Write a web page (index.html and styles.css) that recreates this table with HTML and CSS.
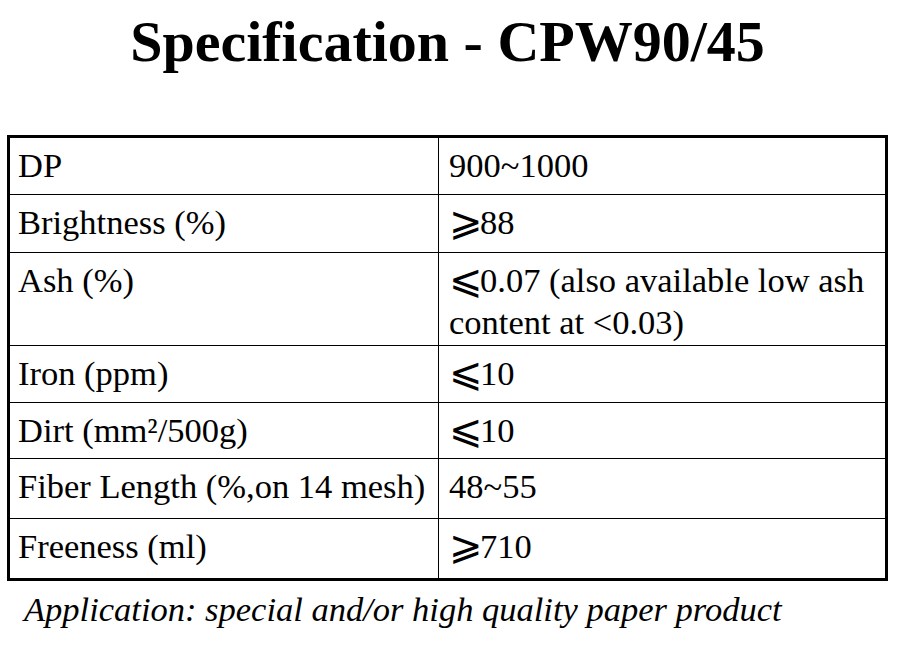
FILE: index.html
```html
<!DOCTYPE html>
<html lang="en">
<head>
    <meta charset="UTF-8">
    <meta name="viewport" content="width=device-width, initial-scale=1.0">
    <title>Specification - CPW90/45</title>
    <link rel="stylesheet" href="styles.css">
</head>
<body>
    <div class="page">
        <h1 class="title">Specification - CPW90/45</h1>
        <table class="spec">
            <tr class="r1">
                <td class="name">DP</td>
                <td class="value">900~1000</td>
            </tr>
            <tr class="r2">
                <td class="name">Brightness (%)</td>
                <td class="value"><span class="sym">⩾</span>88</td>
            </tr>
            <tr class="r3">
                <td class="name">Ash (%)</td>
                <td class="value"><span class="sym">⩽</span>0.07 (also available low ash content at &lt;0.03)</td>
            </tr>
            <tr class="r4">
                <td class="name">Iron (ppm)</td>
                <td class="value"><span class="sym">⩽</span>10</td>
            </tr>
            <tr class="r5">
                <td class="name">Dirt (mm²/500g)</td>
                <td class="value"><span class="sym">⩽</span>10</td>
            </tr>
            <tr class="r6">
                <td class="name">Fiber Length (%,on 14 mesh)</td>
                <td class="value">48~55</td>
            </tr>
            <tr class="r7">
                <td class="name">Freeness (ml)</td>
                <td class="value"><span class="sym">⩾</span>710</td>
            </tr>
        </table>
        <p class="note">Application: special and/or high quality paper product</p>
    </div>
</body>
</html>
```

FILE: styles.css
```css
body {
    margin: 0;
    background: #fff;
    color: #000;
    font-family: 'Liberation Serif', 'Times New Roman', serif;
}
.page {
    width: 881px;
    margin-left: 7px;
}
.title {
    margin: 10px 0 0;
    font-size: 58px;
    line-height: 64px;
    font-weight: bold;
    text-align: center;
}
.spec {
    margin-top: 61px;
    width: 881px;
    border-collapse: collapse;
    table-layout: fixed;
    border: 3px solid #000;
    font-size: 34.5px;
    line-height: 42px;
}
.spec td {
    border: 1px solid #000;
    vertical-align: top;
    padding: 6px 10px 0;
}
.spec td.name {
    width: 410px;
    padding-left: 8px;
    white-space: nowrap;
}
.sym {
    display: inline-block;
    width: 31px;
    font-family: 'DejaVu Sans', 'DejaVu Serif', sans-serif;
    font-size: 40px;
    line-height: 30px;
    font-weight: 200;
    vertical-align: -1px;
}
.r1 { height: 58px; }
.r2 { height: 58px; }
.r3 { height: 93px; }
.r4 { height: 57px; }
.r5 { height: 56px; }
.r6 { height: 60px; }
.r7 { height: 61px; }
.note {
    margin: 7px 0 0;
    padding-left: 17px;
    font-size: 34.5px;
    line-height: 42px;
    font-style: italic;
}
```
